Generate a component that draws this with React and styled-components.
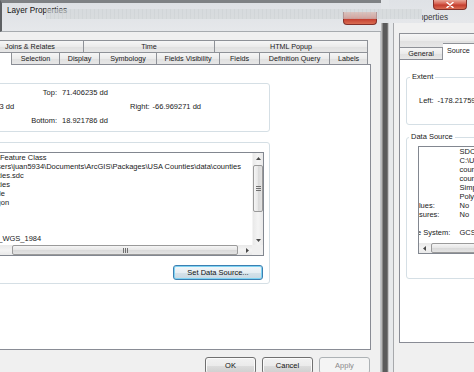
import React from "react";
import styled, { createGlobalStyle } from "styled-components";

const GlobalStyle = createGlobalStyle`
  html, body {
    margin: 0;
    padding: 0;
    background: #f0f0f0;
  }
  body {
    font-family: "Liberation Sans", Arial, sans-serif;
  }
`;

const DATA_LINES = [
  ["Data Type:", "SDC Feature Class"],
  ["Location:", "C:\\Users\\juan5934\\Documents\\ArcGIS\\Packages\\USA Counties\\data\\counties"],
  ["Geodatabase:", "counties.sdc"],
  ["Feature Class:", "counties"],
  ["Feature Type:", "Simple"],
  ["Geometry Type:", "Polygon"],
  ["Coordinates have Z values:", "No"],
  ["Coordinates have measures:", "No"],
  ["", ""],
  ["Geographic Coordinate System:", "GCS_WGS_1984"],
];

const Screen = styled.div`
  position: relative;
  display: flex;
  width: 474px;
  height: 372px;
  overflow: hidden;
  background: #f0f0f0;
  color: #1a1a1a;
  font-size: 7.5px;
`;

const Window = styled.div`
  display: flex;
  flex-direction: column;
  flex: ${p => (p.$width ? `0 0 ${p.$width}px` : "1 1 auto")};
  min-width: 0;
`;

const TitleBar = styled.div`
  display: flex;
  align-items: flex-start;
  height: 32px;
  box-sizing: border-box;
  border-top: 3px solid #7e8184;
  border-left: 2px solid #5d6063;
  border-bottom: 1px solid #a7abaf;
  background: linear-gradient(#dde0e4, #e6e8eb);
`;

const TitleText = styled.div`
  margin: 3px 0 0 5px;
  font-size: 8.2px;
  line-height: 10px;
  color: #111;
  white-space: nowrap;
`;

const SideTitle = styled.div`
  display: flex;
  flex-direction: column;
  height: 23px;
  background: linear-gradient(#dfe2e6, #e5e7ea);
`;

const CloseRow = styled.div`
  display: flex;
  justify-content: flex-end;
  padding-right: 7px;
`;

const ClippedTitle = styled.div`
  width: 60px;
  margin: 3px 0 0 33px;
  overflow: hidden;
  text-indent: -34px;
  font-size: 8.2px;
  line-height: 9px;
  color: #3a3a3a;
  white-space: nowrap;
`;

const CloseButton = styled.div`
  display: flex;
  align-items: center;
  justify-content: center;
  flex: 0 0 34px;
  height: ${p => p.$height}px;
  margin: ${p => p.$margin || 0};
  box-sizing: border-box;
  border: 1px solid #83302a;
  border-top: none;
  border-radius: 0 0 4px 4px;
  background: linear-gradient(#e8a697, #d65d4d 45%, #c33c2e 55%, #d96c52);
`;

const GlassBand = styled.div`
  position: absolute;
  left: 46px;
  top: 9px;
  width: 376px;
  height: 10px;
  background:
    repeating-linear-gradient(90deg, rgba(180, 186, 190, 0.18) 0 1px, transparent 1px 4px),
    rgba(210, 214, 216, 0.62);
`;

const Body = styled.div`
  flex: 1;
  display: flex;
  flex-direction: column;
  min-height: 0;
  padding: ${p => p.$pad};
  background: ${p => p.$bg || "#f0f0f0"};
  border-right: ${p => (p.$edge ? "1px solid #c3c6c9" : "none")};
`;

const Divider = styled.div`
  flex: 0 0 8px;
  background:
    linear-gradient(#e2e5e8, #e2e5e8) top / 100% 23px no-repeat,
    linear-gradient(90deg, #b9b9b9 0 1px, #8a8a8a 1px 2px, #5b5b5b 2px 6px, #787878 6px 7px, #c8c8c8 7px);
`;

const TabRow = styled.div`
  position: relative;
  z-index: ${p => (p.$front ? 2 : 1)};
  display: flex;
  align-items: flex-end;
  height: ${p => p.$height || 12}px;
  margin-left: ${p => p.$shift || 0}px;
`;

const Tab = styled.div`
  flex: 0 0 ${p => p.$w}px;
  box-sizing: border-box;
  height: ${p => p.$h || 12}px;
  margin-bottom: ${p => (p.$active ? -1 : 0)}px;
  border: 1px solid #8e9197;
  border-bottom: none;
  border-left-width: ${p => (p.$first ? 1 : 0)}px;
  background: ${p =>
    p.$active ? "#fff" : "linear-gradient(#f6f6f6, #ebebeb 50%, #e0e0e0 51%, #e7e7e7)"};
  font-size: 7.2px;
  line-height: ${p => (p.$active ? 14 : 11)}px;
  text-align: ${p => p.$align || "center"};
  padding-left: ${p => p.$indent || 0}px;
  white-space: nowrap;
  overflow: hidden;
`;

const Panel = styled.div`
  position: relative;
  z-index: 1;
  display: flex;
  flex-direction: column;
  align-items: flex-start;
  height: ${p => p.$height}px;
  box-sizing: border-box;
  flex-shrink: 0;
  border: 1px solid #898c95;
  border-left-width: ${p => (p.$openLeft ? 0 : 1)}px;
  border-right-width: ${p => (p.$openRight ? 0 : 1)}px;
  background: #fff;
  padding: ${p => p.$pad};
  overflow: hidden;
`;

const GroupBox = styled.fieldset`
  display: flex;
  flex-direction: column;
  flex-shrink: 0;
  width: ${p => p.$width}px;
  min-width: 0;
  box-sizing: border-box;
  margin: ${p => p.$margin || 0};
  padding: ${p => p.$pad};
  border: 1px solid #d5dfe5;
  border-radius: 3px;
`;

const Legend = styled.legend`
  margin-left: -9px;
  padding: 0 2px;
  font-size: 7.5px;
  line-height: 8px;
`;

const ExtentGrid = styled.div`
  display: grid;
  grid-template-columns: 71px 43px 73px auto;
  grid-auto-rows: ${p => p.$row}px;
  align-items: center;
  margin-left: ${p => p.$shift || 0}px;
  white-space: nowrap;
`;

const Pair = styled.div`
  display: flex;
  gap: ${p => p.$gap || 4}px;
`;

const RightLabel = styled.span`
  justify-self: end;
`;

const Value = styled.span`
  padding-left: 5px;
`;

const ListBox = styled.div`
  display: grid;
  grid-template-columns: 1fr 11px;
  grid-template-rows: 1fr 10px;
  flex-shrink: 0;
  width: ${p => (p.$width ? `${p.$width}px` : "auto")};
  align-self: ${p => (p.$width ? "flex-start" : "stretch")};
  height: ${p => p.$height}px;
  box-sizing: border-box;
  border: 1px solid #828790;
  background: #fff;
`;

const Lines = styled.div`
  overflow: hidden;
`;

const LinesInner = styled.div`
  margin-left: -${p => p.$scroll}px;
`;

const Line = styled.div`
  display: grid;
  grid-template-columns: 116px auto;
  height: 9px;
  line-height: 9px;
  white-space: nowrap;
`;

const VScroll = styled.div`
  display: flex;
  flex-direction: column;
  align-items: stretch;
  background: linear-gradient(90deg, #e9e9e9, #f4f4f4 50%, #e9e9e9);
  border-left: 1px solid #f4f4f4;
`;

const HScroll = styled.div`
  display: flex;
  align-items: stretch;
  background: linear-gradient(#e9e9e9, #f4f4f4 50%, #e9e9e9);
`;

const Corner = styled.div`
  background: #f0f0f0;
`;

const Arrow = styled.div`
  display: flex;
  align-items: center;
  justify-content: center;
  flex: 0 0 ${p => p.$size}px;
`;

const Gap = styled.div`
  flex: 0 0 ${p => p.$size}px;
`;

const Fill = styled.div`
  flex: 1;
`;

const Thumb = styled.div`
  display: flex;
  align-items: center;
  justify-content: center;
  flex: 0 0 ${p => p.$size}px;
  box-sizing: border-box;
  border: 1px solid #9a9a9a;
  border-radius: 2px;
  background: ${p =>
    p.$vertical
      ? "linear-gradient(90deg, #f5f5f5, #e6e6e6 50%, #d9d9d9 51%, #e3e3e3)"
      : "linear-gradient(#f5f5f5, #e6e6e6 50%, #d9d9d9 51%, #e3e3e3)"};
`;

const Grip = styled.div`
  width: 5px;
  height: 5px;
  background: ${p =>
    p.$vertical
      ? "repeating-linear-gradient(#6f6f6f 0 1px, transparent 1px 2px)"
      : "repeating-linear-gradient(90deg, #6f6f6f 0 1px, transparent 1px 2px)"};
`;

const ButtonRow = styled.div`
  display: flex;
  justify-content: flex-end;
  gap: 6px;
  padding: 7px 1px 0 0;
`;

const Button = styled.div`
  display: flex;
  align-items: center;
  justify-content: center;
  flex-shrink: 0;
  width: ${p => p.$w}px;
  height: ${p => p.$h || 17}px;
  box-sizing: border-box;
  align-self: ${p => (p.$end ? "flex-end" : "auto")};
  margin: ${p => p.$margin || 0};
  border: 1px solid
    ${p => (p.$variant === "default" ? "#3c7fb1" : p.$variant === "disabled" ? "#adb2b5" : "#707070")};
  border-radius: 3px;
  background: ${p =>
    p.$variant === "disabled"
      ? "#f4f4f4"
      : p.$variant === "default"
      ? "linear-gradient(#f2f7fa, #e6eef3 50%, #d5e2ea 51%, #c9d9e3)"
      : "linear-gradient(#f2f2f2, #ebebeb 50%, #dddddd 51%, #cfcfcf)"};
  box-shadow: ${p =>
    p.$variant === "default"
      ? "inset 0 0 0 1px #7fd3f3"
      : p.$variant === "disabled"
      ? "none"
      : "inset 0 0 0 1px #fbfbfb"};
  color: ${p => (p.$variant === "disabled" ? "#8a8a8a" : "#111")};
  font-size: 7.5px;
  white-space: nowrap;
`;

const Triangle = ({ dir }) => {
  const vertical = dir === "up" || dir === "down";
  const points = {
    up: "0,3 2.5,0 5,3",
    down: "0,0 2.5,3 5,0",
    left: "3,0 0,2.5 3,5",
    right: "0,0 3,2.5 0,5",
  }[dir];
  return (
    <svg width={vertical ? 5 : 3} height={vertical ? 3 : 5} viewBox={vertical ? "0 0 5 3" : "0 0 3 5"}>
      <polygon points={points} fill="#4a4a4a" />
    </svg>
  );
};

const CloseGlyph = () => (
  <svg width="8" height="6" viewBox="0 0 8 6">
    <path d="M1 0.5 L7 5.5 M7 0.5 L1 5.5" stroke="#fff" strokeWidth="1.5" strokeLinecap="round" />
  </svg>
);

const DataList = ({ scroll, height, width, vertical, thumbBefore, thumbSize }) => (
  <ListBox $height={height} $width={width}>
    <Lines>
      <LinesInner $scroll={scroll}>
        {DATA_LINES.map(([label, value], i) => (
          <Line key={i}>
            <span>{label}</span>
            <span>{value}</span>
          </Line>
        ))}
      </LinesInner>
    </Lines>
    <VScroll>
      {vertical && (
        <>
          <Arrow $size={11}>
            <Triangle dir="up" />
          </Arrow>
          <Gap $size={1} />
          <Thumb $size={47} $vertical>
            <Grip $vertical />
          </Thumb>
          <Fill />
          <Arrow $size={10}>
            <Triangle dir="down" />
          </Arrow>
        </>
      )}
    </VScroll>
    <HScroll>
      <Arrow $size={10}>
        <Triangle dir="left" />
      </Arrow>
      <Gap $size={thumbBefore} />
      <Thumb $size={thumbSize}>
        <Grip />
      </Thumb>
      <Fill />
      <Arrow $size={10}>
        <Triangle dir="right" />
      </Arrow>
    </HScroll>
    <Corner />
  </ListBox>
);

const ExtentRows = ({ shift, row }) => (
  <ExtentGrid $shift={shift} $row={row}>
    <span />
    <RightLabel>Top:</RightLabel>
    <Value>71.406235 dd</Value>
    <span />

    <Pair>
      <span>Left:</span>
      <span>-178.217593 dd</span>
    </Pair>
    <span />
    <span />
    <Pair $gap={3}>
      <span>Right:</span>
      <span>-66.969271 dd</span>
    </Pair>

    <span />
    <RightLabel>Bottom:</RightLabel>
    <Value>18.921786 dd</Value>
    <span />
  </ExtentGrid>
);

const BACK_TABS = [
  ["Joins & Relates", 108],
  ["Time", 131],
  ["HTML Popup", 153],
];

const FRONT_TABS = [
  ["Selection", 48],
  ["Display", 40],
  ["Symbology", 57],
  ["Fields Visibility", 63],
  ["Fields", 40],
  ["Definition Query", 70],
  ["Labels", 38],
];

export default function App() {
  return (
    <>
      <GlobalStyle />
      <Screen>
        <Window $width={381}>
          <TitleBar>
            <TitleText>Layer Properties</TitleText>
            <CloseButton $height={13} $margin="9px 4px 0 auto" />
          </TitleBar>
          <Body $pad="8px 9px 0 0" $edge>
            <TabRow $shift={-24}>
              {BACK_TABS.map(([name, w], i) => (
                <Tab key={name} $w={w} $first={i === 0}>
                  {name}
                </Tab>
              ))}
            </TabRow>
            <TabRow $front>
              <Tab $w={12} $h={13} $active />
              {FRONT_TABS.map(([name, w]) => (
                <Tab key={name} $w={w}>
                  {name}
                </Tab>
              ))}
            </TabRow>
            <Panel $height={286} $pad="18px 0 0 0" $openLeft>
              <GroupBox $width={290} $margin="0 0 0 -20px" $pad="1px 0 4px 0">
                <ExtentRows shift={-38} row={14} />
              </GroupBox>
              <GroupBox $width={290} $margin="10px 0 0 -20px" $pad="9px 5px 3px 6px">
                <DataList scroll={122} height={104} vertical thumbBefore={14} thumbSize={226} />
                <Button $w={90} $h={15} $end $margin="9px 1px 0 0" $variant="default">
                  Set Data Source...
                </Button>
              </GroupBox>
            </Panel>
            <ButtonRow>
              <Button $w={51}>OK</Button>
              <Button $w={51}>Cancel</Button>
              <Button $w={51} $variant="disabled">
                Apply
              </Button>
            </ButtonRow>
          </Body>
        </Window>

        <Divider />

        <Window>
          <SideTitle>
            <CloseRow>
              <CloseButton $height={10}>
                <CloseGlyph />
              </CloseButton>
            </CloseRow>
            <ClippedTitle>Layer Properties</ClippedTitle>
          </SideTitle>
          <Body
            $pad="10px 0 0 10px"
            $bg="linear-gradient(90deg, #e7e9eb 0 4px, #a7a9ac 4px 5px, #f0f0f0 5px)"
          >
            <TabRow $height={14}>
              <Tab $w={120} $h={14} $first />
            </TabRow>
            <TabRow $front>
              <Tab $w={44} $first>
                General
              </Tab>
              <Tab $w={60} $h={17} $active $align="left" $indent={4}>
                Source
              </Tab>
            </TabRow>
            <Panel $height={284} $pad="13px 0 0 6px" $openRight>
              <GroupBox $width={220} $pad="0 0 4px 12px">
                <Legend>Extent</Legend>
                <ExtentRows shift={0} row={13} />
              </GroupBox>
              <GroupBox $width={220} $margin="8px 0 0 0" $pad="5px 0 24px 11px">
                <Legend>Data Source</Legend>
                <DataList scroll={75.5} height={108} width={250} thumbBefore={2} thumbSize={200} />
              </GroupBox>
            </Panel>
          </Body>
        </Window>

        <GlassBand />
      </Screen>
    </>
  );
}
